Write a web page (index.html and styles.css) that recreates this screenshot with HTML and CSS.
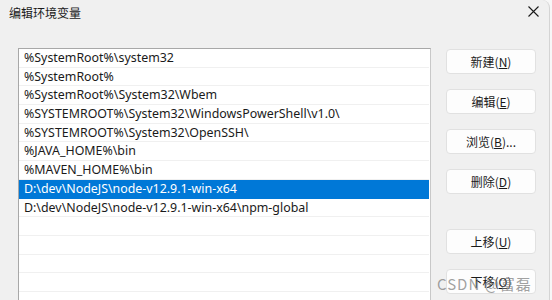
FILE: index.html
```html
<!DOCTYPE html>
<html lang="zh-CN">
<head>
<meta charset="utf-8">
<title>编辑环境变量</title>
<link rel="stylesheet" href="styles.css">
</head>
<body>
<div class="dialog">
  <div class="titlebar">
    <span class="title">编辑环境变量</span>
    <span class="close">
      <svg width="11" height="11" viewBox="0 0 11 11"><path d="M0.5 0.5 L10.5 10.5 M10.5 0.5 L0.5 10.5" stroke="#1a1a1a" stroke-width="1.1" fill="none"/></svg>
    </span>
  </div>
  <div class="content">
    <div class="list">
      <div class="row">%SystemRoot%\system32</div>
      <div class="row">%SystemRoot%</div>
      <div class="row">%SystemRoot%\System32\Wbem</div>
      <div class="row">%SYSTEMROOT%\System32\WindowsPowerShell\v1.0\</div>
      <div class="row">%SYSTEMROOT%\System32\OpenSSH\</div>
      <div class="row">%JAVA_HOME%\bin</div>
      <div class="row">%MAVEN_HOME%\bin</div>
      <div class="row selected">D:\dev\NodeJS\node-v12.9.1-win-x64</div>
      <div class="row">D:\dev\NodeJS\node-v12.9.1-win-x64\npm-global</div>
      <div class="row"></div>
      <div class="row"></div>
      <div class="row"></div>
      <div class="row"></div>
    </div>
    <div class="buttons">
      <button class="btn">新建(<u>N</u>)</button>
      <button class="btn">编辑(<u>E</u>)</button>
      <button class="btn">浏览(<u>B</u>)...</button>
      <button class="btn">删除(<u>D</u>)</button>
      <button class="btn spaced">上移(<u>U</u>)</button>
      <button class="btn">下移(<u>O</u>)</button>
    </div>
  </div>
  <div class="watermark">CSDN @富磊</div>
</div>
</body>
</html>
```
FILE: styles.css
```css
html, body {
  margin: 0;
  padding: 0;
  width: 552px;
  height: 300px;
  overflow: hidden;
  background: #f7f7f7;
  font-family: "Noto Sans", "Noto Sans CJK SC", sans-serif;
}
.dialog {
  position: relative;
  width: 549px;
  height: 300px;
  background: #f0f0f0;
  border-right: 1px solid #d4d4d4;
  border-top-right-radius: 8px;
  box-sizing: content-box;
}
.titlebar {
  height: 28px;
  display: flex;
  align-items: center;
  justify-content: space-between;
  padding: 0 0 0 9px;
}
.title {
  font-family: "Noto Sans CJK SC", sans-serif;
  font-size: 12px;
  color: #1a1a1a;
  margin-top: -3px;
}
.close {
  width: 11px;
  height: 11px;
  margin-right: 10px;
  margin-top: -5px;
  display: flex;
}
.content {
  display: flex;
  align-items: flex-start;
  padding: 20px 0 0 18px;
}
.list {
  width: 410px;
  height: 260px;
  background: #ffffff;
  border: 1px solid #a8a8a8;
  border-right-color: #c8c8c8;
  padding: 0 1px 0 0;
  box-sizing: content-box;
}
.row {
  height: 18.7px;
  box-sizing: border-box;
  border-bottom: 1px solid #f0f0f0;
  padding-left: 5px;
  font-size: 12.4px;
  line-height: 18px;
  color: #1a1a1a;
  white-space: nowrap;
  overflow: hidden;
}
.row.selected {
  background: #0078d7;
  color: #ffffff;
  border-bottom-color: #0078d7;
}
.buttons {
  display: flex;
  flex-direction: column;
  gap: 15px;
  margin-left: 15px;
  margin-top: 1px;
}
.btn {
  width: 90px;
  height: 25px;
  background: #fdfdfd;
  border: 1px solid #e1e1e1;
  border-radius: 4px;
  font-family: "Noto Sans CJK SC", sans-serif;
  font-size: 12px;
  color: #1a1a1a;
  padding: 0;
  line-height: 23px;
}
.btn.spaced {
  margin-top: 20px;
}
.watermark {
  position: absolute;
  left: 437px;
  top: 273px;
  font-family: "Noto Sans CJK SC", sans-serif;
  font-size: 15px;
  letter-spacing: 1px;
  color: rgba(120, 120, 120, 0.7);
  white-space: nowrap;
}
```
